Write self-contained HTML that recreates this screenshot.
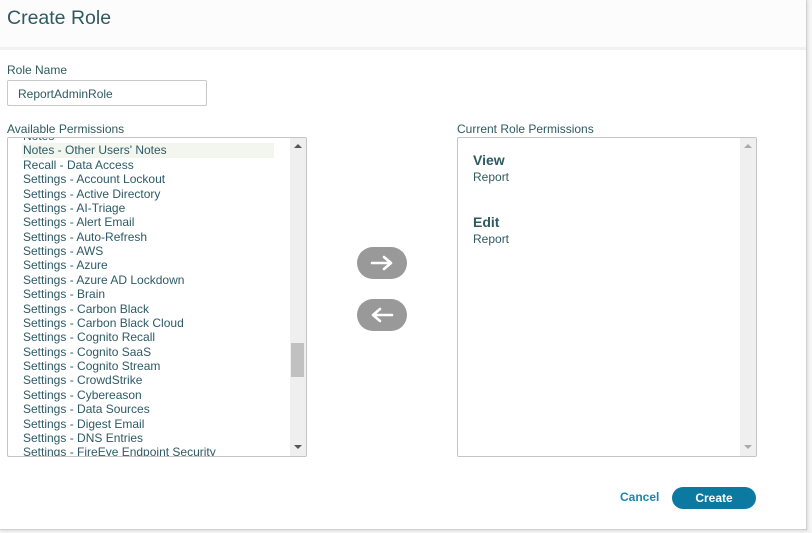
<!DOCTYPE html>
<html><head><style>
*{margin:0;padding:0;box-sizing:border-box}
body{width:812px;height:533px;background:#f4f4f4;font-family:"Liberation Sans",sans-serif;position:relative;overflow:hidden}
#page{position:absolute;left:0;top:0;width:807px;height:530px;background:#fff;border-right:1px solid #d0d0d0;border-bottom:1px solid #d0d0d0;box-shadow:1px 1px 2px #ddd}
#hdr{position:absolute;left:0;top:0;width:806px;height:50px;background:#fcfcfd;border-bottom:3px solid #f0f1f3}
#hdr h1{position:absolute;left:7px;top:7px;font-size:19.5px;font-weight:normal;color:#2f5a60}
.lbl{position:absolute;font-size:12px;color:#2f5a60}
.inp{position:absolute;left:7px;top:80px;width:200px;height:26px;border:1px solid #c8c8c8;border-radius:2px;font-size:12px;color:#2f5a60;padding:6px 0 0 10px}
.box{position:absolute;top:137px;width:300px;height:320px;border:1px solid #c4c4c4;border-radius:2px;background:#fff;overflow:hidden}
.sb{position:absolute;right:0;top:0;width:16px;height:100%;background:#efefef}
.up,.dn{position:absolute;left:4px;width:0;height:0;border-left:4px solid transparent;border-right:4px solid transparent}
.up{top:6px;border-bottom:4px solid #555}
.dn{bottom:7px;border-top:4px solid #555}
.thumb{position:absolute;left:1px;top:205px;width:13px;height:34px;background:#c1c1c1}
.list{position:absolute;left:15px;top:-9px;font-size:12px;line-height:14.38px;color:#2d5a66}
.list div{white-space:nowrap}
.sel{background:#f3f6ef;width:252px;margin-left:-1px;padding-left:1px}
.arr{position:absolute;left:357px;width:50px;height:32px;border-radius:16px;background:#999;display:flex;align-items:center;justify-content:center}
.perm{position:absolute;left:15px;color:#2f5a60}
.perm b{display:block;font-size:14px}
.perm span{font-size:12px;margin-left:0}
</style></head><body>
<div id="page">
<div id="hdr"><h1>Create Role</h1></div>
<div class="lbl" style="left:7px;top:63px">Role Name</div>
<div class="inp">ReportAdminRole</div>
<div class="lbl" style="left:7px;top:122px">Available Permissions</div>
<div class="lbl" style="left:457px;top:122px">Current Role Permissions</div>
<div class="box" style="left:7px">
<div class="list">
<div>Notes</div>
<div class="sel">Notes - Other Users' Notes</div>
<div>Recall - Data Access</div>
<div>Settings - Account Lockout</div>
<div>Settings - Active Directory</div>
<div>Settings - AI-Triage</div>
<div>Settings - Alert Email</div>
<div>Settings - Auto-Refresh</div>
<div>Settings - AWS</div>
<div>Settings - Azure</div>
<div>Settings - Azure AD Lockdown</div>
<div>Settings - Brain</div>
<div>Settings - Carbon Black</div>
<div>Settings - Carbon Black Cloud</div>
<div>Settings - Cognito Recall</div>
<div>Settings - Cognito SaaS</div>
<div>Settings - Cognito Stream</div>
<div>Settings - CrowdStrike</div>
<div>Settings - Cybereason</div>
<div>Settings - Data Sources</div>
<div>Settings - Digest Email</div>
<div>Settings - DNS Entries</div>
<div>Settings - FireEye Endpoint Security</div>
</div>
<div class="sb"><div class="up"></div><div class="thumb"></div><div class="dn"></div></div>
</div>
<div class="arr" style="top:247px"><svg width="24" height="16" viewBox="0 0 24 16"><path d="M2 8H21M14 2L21 8L14 14" stroke="#fff" stroke-width="2.6" fill="none" stroke-linecap="round" stroke-linejoin="round"/></svg></div>
<div class="arr" style="top:299px"><svg width="24" height="16" viewBox="0 0 24 16"><path d="M22 8H3M10 2L3 8L10 14" stroke="#fff" stroke-width="2.6" fill="none" stroke-linecap="round" stroke-linejoin="round"/></svg></div>
<div class="box" style="left:457px">
<div class="perm" style="top:14px"><b>View</b><span>Report</span></div>
<div class="perm" style="top:76px"><b>Edit</b><span>Report</span></div>
<div class="sb"><div class="up" style="border-bottom-color:#aaa"></div><div class="dn" style="border-top-color:#aaa"></div></div>
</div>
<div style="position:absolute;left:620px;top:490px;font-size:12px;font-weight:bold;color:#1a86ad">Cancel</div>
<div style="position:absolute;left:672px;top:487px;width:84px;height:22px;border-radius:11px;background:#0c7aa0;color:#fff;font-size:12px;font-weight:bold;text-align:center;line-height:22px">Create</div>
</div>
</body></html>
